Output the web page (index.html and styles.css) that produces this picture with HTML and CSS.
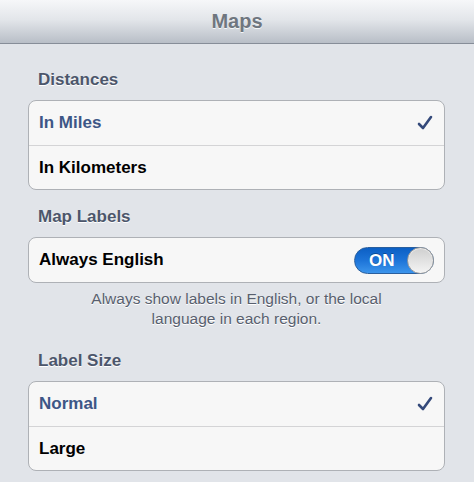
FILE: index.html
```html
<!DOCTYPE html>
<html>
<head>
<meta charset="utf-8">
<link rel="stylesheet" href="styles.css">
</head>
<body>
<header class="navbar"><h1 class="title">Maps</h1></header>
<main class="content">
  <h2 class="section-header">Distances</h2>
  <div class="group">
    <div class="row selected"><span class="label">In Miles</span>
      <svg class="check" width="16" height="16" viewBox="0 0 16 16"><path d="M2 9 L6 13 L14 2" fill="none" stroke="#34497a" stroke-width="2.6" stroke-linejoin="round" stroke-linecap="round"/></svg>
    </div>
    <div class="row"><span class="label">In Kilometers</span></div>
  </div>
  <h2 class="section-header">Map Labels</h2>
  <div class="group">
    <div class="row"><span class="label">Always English</span>
      <div class="switch"><span class="switch-text">ON</span><span class="knob"></span></div>
    </div>
  </div>
  <p class="footer">Always show labels in English, or the local<br>language in each region.</p>
  <h2 class="section-header">Label Size</h2>
  <div class="group">
    <div class="row selected"><span class="label">Normal</span>
      <svg class="check" width="16" height="16" viewBox="0 0 16 16"><path d="M2 9 L6 13 L14 2" fill="none" stroke="#34497a" stroke-width="2.6" stroke-linejoin="round" stroke-linecap="round"/></svg>
    </div>
    <div class="row"><span class="label">Large</span></div>
  </div>
</main>
</body>
</html>
```
FILE: styles.css
```css
html, body {
  margin: 0;
  padding: 0;
}
body {
  width: 474px;
  height: 482px;
  overflow: hidden;
  background: #e1e4e9;
  font-family: "Liberation Sans", Arial, sans-serif;
}
.navbar {
  height: 43px;
  border-bottom: 1px solid #868d98;
  background: linear-gradient(#f6f7f9 0%, #e3e6ea 45%, #b8bec7 100%);
  display: flex;
  align-items: center;
  justify-content: center;
}
.title {
  margin: 0;
  font-size: 20px;
  font-weight: bold;
  color: #6f767f;
  text-shadow: 0 1px 0 rgba(255,255,255,0.8);
}
.content {
  padding: 26px 29px 0 28px;
}
.section-header {
  margin: 0 0 10px 10px;
  height: 20px;
  line-height: 20px;
  font-size: 17px;
  font-weight: bold;
  color: #4c566b;
  text-shadow: 0 1px 0 #fff;
}
.group {
  background: #f7f7f7;
  border: 1px solid #aeb1b6;
  border-radius: 8px;
  margin-bottom: 17px;
}
.row {
  height: 44px;
  display: flex;
  align-items: center;
  justify-content: space-between;
  padding: 0 11px 0 10px;
  border-top: 1px solid #d4d4d6;
}
.row:first-child {
  border-top: none;
}
.row + .row {
  height: 43px;
}
.label {
  font-size: 17px;
  font-weight: bold;
  color: #000;
}
.selected .label {
  color: #3d5686;
}
.switch {
  position: relative;
  width: 80px;
  height: 27px;
  box-sizing: border-box;
  border-radius: 14px;
  border: 1px solid #2a5f9e;
  background: linear-gradient(#0c5fc4 0%, #1d74d8 50%, #3c95ec 100%);
  margin-right: -1px;
}
.switch-text {
  position: absolute;
  left: 14px;
  top: 0;
  line-height: 25px;
  font-size: 17px;
  font-weight: bold;
  color: #fff;
  text-shadow: 0 -1px 0 rgba(0,0,0,0.3);
}
.knob {
  position: absolute;
  right: -1px;
  top: -1px;
  width: 27px;
  height: 27px;
  box-sizing: border-box;
  border-radius: 50%;
  border: 1px solid #9a9a9a;
  background: linear-gradient(#cfcfcf, #f4f4f4);
  box-shadow: inset 0 1px 1px rgba(255,255,255,0.6);
}
.footer {
  margin: -11px 0 22px 0;
  text-align: center;
  font-size: 15.5px;
  line-height: 20px;
  color: #585f6e;
  text-shadow: 0 1px 0 #fff;
}
```
